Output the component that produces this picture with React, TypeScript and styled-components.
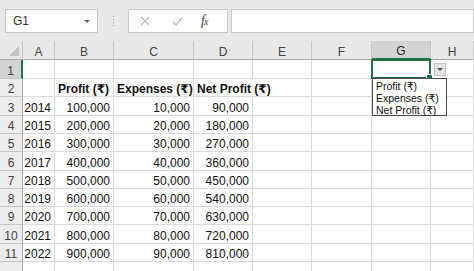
import styled, { createGlobalStyle } from 'styled-components'

const GlobalStyle = createGlobalStyle`
  html, body {
    margin: 0;
    padding: 0;
    background: #ffffff;
    overflow: hidden;
  }
  body {
    font-family: 'Liberation Sans', 'DejaVu Sans', 'Noto Sans', Arial, sans-serif;
    color: #222;
  }
`

const columns = ['A', 'B', 'C', 'D', 'E', 'F', 'G', 'H']
// row heights taken from the screenshot (header first)
const rowHeights = [19, 19, 18, 19, 18, 18, 19, 18, 18, 18, 19, 18, 18]

const data = [
  ['2014', '100,000', '10,000', '90,000'],
  ['2015', '200,000', '20,000', '180,000'],
  ['2016', '300,000', '30,000', '270,000'],
  ['2017', '400,000', '40,000', '360,000'],
  ['2018', '500,000', '50,000', '450,000'],
  ['2019', '600,000', '60,000', '540,000'],
  ['2020', '700,000', '70,000', '630,000'],
  ['2021', '800,000', '80,000', '720,000'],
  ['2022', '900,000', '90,000', '810,000'],
]

const Toolbar = styled.div`
  height: 41px;
  background: #e8e8e8;
  display: flex;
  align-items: flex-start;
  padding-top: 9px;
  padding-left: 5px;
  box-sizing: border-box;
`

const NameBox = styled.div`
  width: 93px;
  height: 24px;
  box-sizing: border-box;
  background: #fff;
  border: 1px solid #c8c8c8;
  display: flex;
  align-items: center;
  justify-content: space-between;
  padding: 0 7px 0 7px;
  font-size: 12px;
  color: #333;
`

const Caret = styled.span`
  width: 0;
  height: 0;
  border-left: 3px solid transparent;
  border-right: 3px solid transparent;
  border-top: 3px solid #666;
`

const Grip = styled.div`
  width: 30px;
  height: 24px;
  display: flex;
  flex-direction: column;
  align-items: center;
  justify-content: center;
  gap: 2px;

  span {
    width: 1px;
    height: 1px;
    background: #9a9a9a;
  }
`

const FuncBox = styled.div`
  width: 100px;
  height: 24px;
  box-sizing: border-box;
  background: #fff;
  border: 1px solid #c8c8c8;
  display: flex;
  align-items: center;
  padding-left: 11px;
  gap: 22px;
`

const Fx = styled.span`
  font-family: 'Liberation Serif', 'DejaVu Serif', serif;
  font-style: italic;
  font-size: 14px;
  color: #444;
  margin-left: -4px;
  letter-spacing: -1px;

  small {
    font-size: 10px;
  }
`

const FormulaInput = styled.div`
  flex: 1;
  height: 24px;
  box-sizing: border-box;
  background: #fff;
  border: 1px solid #c8c8c8;
  margin-left: 3px;
`

const Sheet = styled.div`
  display: grid;
  grid-template-columns: 23px 32px 59px 80px 59px 59px 60px 59px 1fr;
  grid-template-rows: ${rowHeights.map((h) => h + 'px').join(' ')};
  background: #fff;
`

const Corner = styled.div`
  background: #e8e8e8;
  border-right: 1px solid #c6c6c6;
  border-bottom: 1px solid #ababab;
  position: relative;

  &::after {
    content: '';
    position: absolute;
    right: 3px;
    bottom: 3px;
    border-left: 10px solid transparent;
    border-bottom: 10px solid #c4c4c4;
  }
`

const ColHead = styled.div<{ $active?: boolean }>`
  background: ${(p) => (p.$active ? '#d3d3d3' : '#e8e8e8')};
  border-right: 1px solid #c6c6c6;
  border-bottom: ${(p) => (p.$active ? '2px solid #217346' : '1px solid #ababab')};
  display: flex;
  align-items: center;
  justify-content: center;
  font-size: 12px;
  color: ${(p) => (p.$active ? '#262626' : '#444')};
  padding-top: 3px;
  box-sizing: border-box;
`

const RowHead = styled.div<{ $active?: boolean }>`
  background: ${(p) => (p.$active ? '#d3d3d3' : '#ececec')};
  border-right: ${(p) => (p.$active ? '2px solid #217346' : '1px solid #ababab')};
  border-bottom: 1px solid #c6c6c6;
  display: flex;
  align-items: flex-end;
  justify-content: center;
  font-size: 12px;
  line-height: 14px;
  color: #444;
  box-sizing: border-box;
`

const Cell = styled.div<{ $right?: boolean; $bold?: boolean; $spill?: boolean }>`
  border-right: ${(p) => (p.$spill ? 'none' : '1px solid #dadada')};
  border-bottom: 1px solid #dadada;
  display: flex;
  align-items: flex-end;
  justify-content: ${(p) => (p.$right ? 'flex-end' : 'flex-start')};
  padding: 0 3px;
  font-size: 12px;
  line-height: 14px;
  font-weight: ${(p) => (p.$bold ? 700 : 400)};
  color: #111;
  white-space: nowrap;
  box-sizing: border-box;
  min-width: 0;
`

const ActiveCell = styled(Cell)`
  position: relative;
  z-index: 2;
`

const SelectionFrame = styled.div`
  position: absolute;
  left: -1px;
  top: -1px;
  right: -1px;
  bottom: -1px;
  border: 2px solid #217346;
  pointer-events: none;
`

const FillHandle = styled.div`
  position: absolute;
  right: -3px;
  bottom: -3px;
  width: 5px;
  height: 5px;
  background: #217346;
  border: 1px solid #fff;
`

const DropButton = styled.div`
  position: absolute;
  left: 62px;
  top: 3px;
  width: 12px;
  height: 13px;
  box-sizing: border-box;
  background: #e4e4e4;
  border: 1px solid #c2c2c2;
  display: flex;
  align-items: center;
  justify-content: center;
`

const DropArrow = styled.span`
  width: 0;
  height: 0;
  border-left: 3px solid transparent;
  border-right: 3px solid transparent;
  border-top: 3px solid #555;
`

const DropList = styled.div`
  position: absolute;
  left: 0;
  top: 18px;
  width: 75px;
  height: 38px;
  box-sizing: border-box;
  background: #fff;
  border: 1px solid #4a4a4a;
  padding: 1px 0 0 3px;
  font-size: 10.5px;
  line-height: 12px;
  color: #111;
  white-space: nowrap;
`

const CrossIcon = () => (
  <svg width="10" height="10" viewBox="0 0 10 10">
    <path d="M1 1 L9 9 M9 1 L1 9" stroke="#b8b8b8" strokeWidth="1.2" fill="none" />
  </svg>
)

const CheckIcon = () => (
  <svg width="11" height="9" viewBox="0 0 11 9">
    <path d="M1 5 L4 8 L10 1" stroke="#b8b8b8" strokeWidth="1.3" fill="none" />
  </svg>
)

const App = () => {
  const body: (string | null)[][] = [
    [null, null, null, null],
    [null, 'Profit (₹)', 'Expenses (₹)', 'Net Profit (₹)'],
    ...data,
    [null, null, null, null],
  ]

  return (
    <>
      <GlobalStyle />
      <Toolbar>
        <NameBox>
          <span>G1</span>
          <Caret />
        </NameBox>
        <Grip>
          <span />
          <span />
          <span />
          <span />
        </Grip>
        <FuncBox>
          <CrossIcon />
          <CheckIcon />
          <Fx>
            f<small>x</small>
          </Fx>
        </FuncBox>
        <FormulaInput />
      </Toolbar>

      <Sheet>
        <Corner />
        {columns.map((c) => (
          <ColHead key={c} $active={c === 'G'}>
            {c}
          </ColHead>
        ))}

        {body.map((row, r) => {
          const rowNo = r + 1
          const isHeader = rowNo === 2
          // row 12 is cut off by the window, its number is not visible
          const label = rowNo <= 11 ? rowNo : ''
          return [
            <RowHead key={'h' + rowNo} $active={rowNo === 1}>
              {label}
            </RowHead>,
            ...columns.map((c, ci) => {
              const value = row[ci] ?? null
              if (rowNo === 1 && c === 'G') {
                return (
                  <ActiveCell key={c + rowNo}>
                    <SelectionFrame />
                    <FillHandle />
                    <DropButton>
                      <DropArrow />
                    </DropButton>
                    <DropList>
                      <div>Profit (₹)</div>
                      <div>Expenses (₹)</div>
                      <div>Net Profit (₹)</div>
                    </DropList>
                  </ActiveCell>
                )
              }
              return (
                <Cell
                  key={c + rowNo}
                  $right={!isHeader}
                  $bold={isHeader}
                  $spill={isHeader && c === 'D'}
                >
                  {value}
                </Cell>
              )
            }),
          ]
        })}
      </Sheet>
    </>
  )
}

export default App
